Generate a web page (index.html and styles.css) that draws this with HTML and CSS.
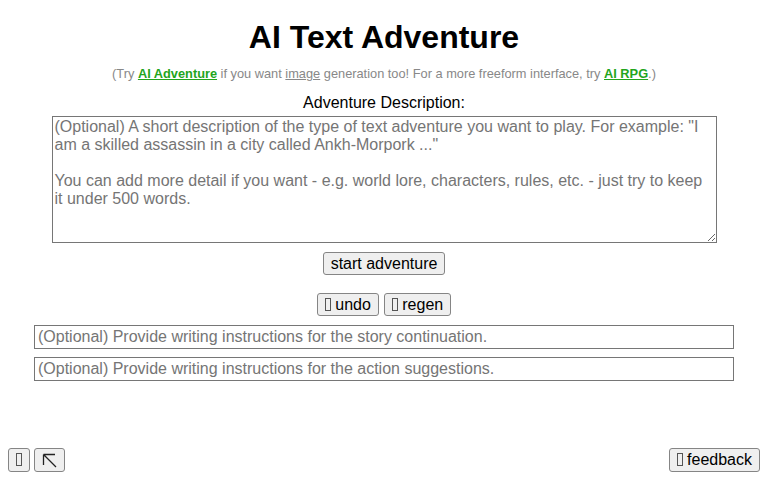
FILE: index.html
```html
<!DOCTYPE html>
<html lang="en">
<head>
    <meta charset="UTF-8">
    <meta name="viewport" content="width=device-width, initial-scale=1.0">
    <title>AI Text Adventure</title>
    <link rel="stylesheet" href="styles.css">
</head>
<body>
    <div class="page">
        <h1 class="title">AI Text Adventure</h1>
        <p class="subtitle">(Try <a class="green-link" href="#">AI Adventure</a> if you want <a class="plain-link" href="#">image</a> generation too! For a more freeform interface, try <a class="green-link" href="#">AI RPG</a>.)</p>

        <div class="setup">
            <label class="desc-label" for="descInput">Adventure Description:</label>
            <textarea id="descInput" class="desc-input" placeholder="(Optional) A short description of the type of text adventure you want to play. For example: &quot;I am a skilled assassin in a city called Ankh-Morpork ...&quot;&#10;&#10;You can add more detail if you want - e.g. world lore, characters, rules, etc. - just try to keep it under 500 words."></textarea>
            <button class="btn">start adventure</button>
        </div>

        <div class="controls">
            <button class="btn"><span class="tofu"></span> undo</button>
            <button class="btn"><span class="tofu"></span> regen</button>
        </div>

        <div class="instructions">
            <input type="text" class="instr-input" placeholder="(Optional) Provide writing instructions for the story continuation.">
            <input type="text" class="instr-input" placeholder="(Optional) Provide writing instructions for the action suggestions.">
        </div>

        <div class="footer">
            <div class="footer-left">
                <button class="btn btn-foot"><span class="tofu"></span></button>
                <button class="btn btn-foot arrow">
                    <svg class="arrow-icon" width="15" height="15" viewBox="0 0 15 15">
                        <path d="M1.5 1.5 H13 M1.5 1.5 V12 M1.5 1.5 L14 14" fill="none" stroke="#222" stroke-width="1.3"/>
                    </svg>
                </button>
            </div>
            <button class="btn btn-foot"><span class="tofu"></span> feedback</button>
        </div>
    </div>
</body>
</html>
```

FILE: styles.css
```css
body {
    margin: 8px;
    font-family: 'Liberation Sans', Arial, sans-serif;
    color: #000;
    background-color: #fff;
}

.page {
    min-height: calc(100vh - 16px);
    display: flex;
    flex-direction: column;
    align-items: center;
}

.title {
    font-size: 32px;
    font-weight: bold;
    margin: 11px 0 0 0;
    line-height: 37px;
}

.subtitle {
    font-size: 12.8px;
    color: #888;
    margin: 10px 0 0 0;
    line-height: 15px;
}

.green-link {
    color: #22a51c;
    font-weight: bold;
}

.plain-link {
    color: #888;
}

.setup {
    display: flex;
    flex-direction: column;
    align-items: center;
    margin-top: 13px;
}

.desc-label {
    font-size: 16px;
    line-height: 18px;
}

.desc-input {
    width: 665px;
    height: 127px;
    box-sizing: border-box;
    margin: 4px 0 9px 0;
    padding: 1px 2px;
    font-family: 'Liberation Sans', Arial, sans-serif;
    font-size: 16px;
    line-height: 18px;
    border: 1px solid #767676;
    resize: vertical;
}

.desc-input::placeholder,
.instr-input::placeholder {
    color: #757575;
}

.btn {
    font-family: 'Liberation Sans', Arial, sans-serif;
    font-size: 16px;
    line-height: 19px;
    padding: 1px 7px;
    background-color: #efefef;
    border: 1px solid #858585;
    border-radius: 3px;
    color: #000;
}

.controls {
    display: flex;
    gap: 5px;
    margin-top: 18px;
}

.tofu {
    display: inline-block;
    width: 4px;
    height: 11px;
    border: 1px solid #555;
    vertical-align: -1px;
}

.instructions {
    display: flex;
    flex-direction: column;
    gap: 8px;
    margin-top: 9px;
}

.instr-input {
    width: 700px;
    height: 24px;
    box-sizing: border-box;
    margin: 0;
    padding: 1px 3px;
    font-family: 'Liberation Sans', Arial, sans-serif;
    font-size: 16px;
    border: 1px solid #767676;
}

.footer {
    margin-top: auto;
    width: 100%;
    display: flex;
    justify-content: space-between;
    align-items: flex-end;
}

.footer-left {
    display: flex;
    gap: 4px;
}

.btn-foot {
    line-height: 20px;
}

.arrow {
    width: 31px;
    height: 24px;
    padding: 0;
    display: flex;
    align-items: center;
    justify-content: center;
}

.arrow-icon {
    display: block;
}
```
